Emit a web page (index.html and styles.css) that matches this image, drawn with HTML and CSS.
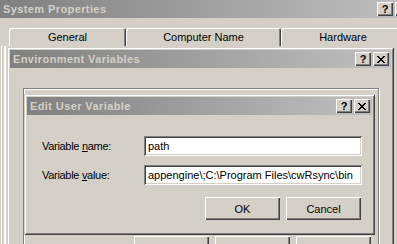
FILE: index.html
```html
<!DOCTYPE html>
<html lang="en">
<head>
  <meta charset="UTF-8">
  <title>Edit User Variable</title>
  <link rel="stylesheet" href="styles.css">
</head>
<body>
  <div class="desktop">
    <div class="window sysprops">
      <div class="caption">
        <span class="caption-title">System Properties</span>
        <div class="caption-buttons">
          <span class="caption-btn">?</span>
          <span class="caption-btn close-gap">
            <svg width="8" height="7" viewBox="0 0 8 7"><path d="M0 0h2v1H0zM6 0h2v1H6zM1 1h2v1H1zM5 1h2v1H5zM2 2h4v1H2zM3 3h2v1H3zM2 4h4v1H2zM1 5h2v1H1zM5 5h2v1H5zM0 6h2v1H0zM6 6h2v1H6z"/></svg>
          </span>
        </div>
      </div>
      <div class="sys-client">
        <div class="tab-row">
          <div class="tab tab-general">General</div>
          <div class="tab tab-computer">Computer Name</div>
          <div class="tab tab-hardware">Hardware</div>
        </div>
        <div class="tab-panel"></div>
      </div>
    </div>

    <div class="window envvars">
      <div class="caption">
        <span class="caption-title">Environment Variables</span>
        <div class="caption-buttons">
          <span class="caption-btn">?</span>
          <span class="caption-btn close-gap">
            <svg width="8" height="7" viewBox="0 0 8 7"><path d="M0 0h2v1H0zM6 0h2v1H6zM1 1h2v1H1zM5 1h2v1H5zM2 2h4v1H2zM3 3h2v1H3zM2 4h4v1H2zM1 5h2v1H1zM5 5h2v1H5zM0 6h2v1H0zM6 6h2v1H6z"/></svg>
          </span>
        </div>
      </div>
      <div class="env-client">
        <div class="groupbox">
          <div class="var-list"></div>
          <!-- New / Edit / Delete, only their top edges show below the dialog -->
          <div class="button-row">
            <button class="btn" aria-label="New"></button>
            <button class="btn" aria-label="Edit"></button>
            <button class="btn" aria-label="Delete"></button>
          </div>
        </div>
      </div>
    </div>

    <div class="window edit-var">
      <div class="caption">
        <span class="caption-title">Edit User Variable</span>
        <div class="caption-buttons">
          <span class="caption-btn">?</span>
          <span class="caption-btn close-gap">
            <svg width="8" height="7" viewBox="0 0 8 7"><path d="M0 0h2v1H0zM6 0h2v1H6zM1 1h2v1H1zM5 1h2v1H5zM2 2h4v1H2zM3 3h2v1H3zM2 4h4v1H2zM1 5h2v1H1zM5 5h2v1H5zM0 6h2v1H0zM6 6h2v1H6z"/></svg>
          </span>
        </div>
      </div>
      <div class="edit-form">
        <label class="field-label">Variable <u>n</u>ame:</label>
        <div class="field">path</div>
        <label class="field-label">Variable <u>v</u>alue:</label>
        <div class="field">appengine\;C:\Program Files\cwRsync\bin</div>
      </div>
      <div class="dialog-buttons">
        <button class="btn">OK</button>
        <button class="btn">Cancel</button>
      </div>
    </div>
  </div>
</body>
</html>
```

FILE: styles.css
```css
body {
  margin: 0;
  width: 397px;
  height: 244px;
  overflow: hidden;
  background: #d4d0c8;
  font-family: 'Liberation Sans', Arial, sans-serif;
  font-size: 11px;
  color: #000;
}
.desktop {
  position: relative;
  width: 397px;
  height: 244px;
  overflow: hidden;
}
.window {
  position: absolute;
  box-sizing: border-box;
  padding: 3px;
  background: #d4d0c8;
  box-shadow: inset 1px 1px #d4d0c8, inset -1px -1px #404040,
              inset 2px 2px #fff, inset -2px -2px #808080;
}
.sysprops {
  left: -3px;
  top: -3px;
  width: 419px;
  height: 270px;
}
.envvars {
  left: 7px;
  top: 47px;
  width: 387px;
  height: 230px;
}
.edit-var {
  left: 24px;
  top: 94px;
  width: 351px;
  height: 141px;
}
.caption {
  height: 18px;
  display: flex;
  align-items: center;
  justify-content: space-between;
  background: linear-gradient(to right, #808080, #c0c0c0);
}
.caption-title {
  padding-left: 3px;
  font-weight: bold;
  letter-spacing: 0.4px;
  color: #d4d0c8;
}
.caption-buttons {
  display: flex;
  margin-right: 2px;
}
.caption-btn {
  width: 16px;
  height: 14px;
  box-sizing: border-box;
  display: flex;
  align-items: center;
  justify-content: center;
  background: #d4d0c8;
  box-shadow: inset 1px 1px #fff, inset -1px -1px #404040, inset -2px -2px #808080;
  font-weight: bold;
  font-size: 11px;
  line-height: 14px;
}
.close-gap {
  margin-left: 2px;
}
.caption-btn svg {
  display: block;
}

/* System Properties */
.sys-client {
  padding: 10px 0 0 0;
}
.tab-row {
  display: flex;
  padding-left: 9px;
  height: 18px;
}
.tab {
  box-sizing: border-box;
  height: 18px;
  display: flex;
  align-items: center;
  justify-content: center;
  border-radius: 2px 2px 0 0;
  box-shadow: inset 1px 1px #fff, inset -1px 0 #404040, inset -2px 0 #808080;
}
.tab-general { width: 117px; }
.tab-computer { width: 155px; }
.tab-hardware { width: 124px; }
.tab-panel {
  height: 200px;
  margin-left: 1px;
  border-left: 1px solid #fff;
  box-shadow: 3px 0 0 0 #fff;
  width: 1px;
}

/* Environment Variables */
.env-client {
  padding: 20px 12px 0 13px;
}
.groupbox {
  border: 1px solid #808080;
  box-shadow: 1px 1px 0 #fff, inset 1px 1px 0 #fff;
  height: 200px;
  padding: 1px 7px 0 0;
}
.var-list {
  height: 146px;
}
.button-row {
  display: flex;
  justify-content: flex-end;
  gap: 6px;
}
.btn {
  width: 75px;
  height: 23px;
  padding: 0;
  border: none;
  background: #d4d0c8;
  box-shadow: inset 1px 1px #fff, inset -1px -1px #404040, inset -2px -2px #808080;
  font-family: 'Liberation Sans', Arial, sans-serif;
  font-size: 11px;
  color: #000;
}

/* Edit User Variable */
.edit-form {
  display: grid;
  grid-template-columns: 102px 218px;
  row-gap: 9px;
  align-items: center;
  padding: 21px 10px 0 15px;
}
.field-label {
  white-space: nowrap;
  letter-spacing: -0.3px;
}
.field {
  box-sizing: border-box;
  height: 20px;
  padding: 0 4px;
  display: flex;
  align-items: center;
  background: #fff;
  white-space: nowrap;
  overflow: hidden;
  box-shadow: inset 1px 1px #808080, inset -1px -1px #fff,
              inset 2px 2px #404040, inset -2px -2px #d4d0c8;
}
.dialog-buttons {
  display: flex;
  justify-content: flex-end;
  gap: 6px;
  padding: 12px 11px 0 0;
}
```
